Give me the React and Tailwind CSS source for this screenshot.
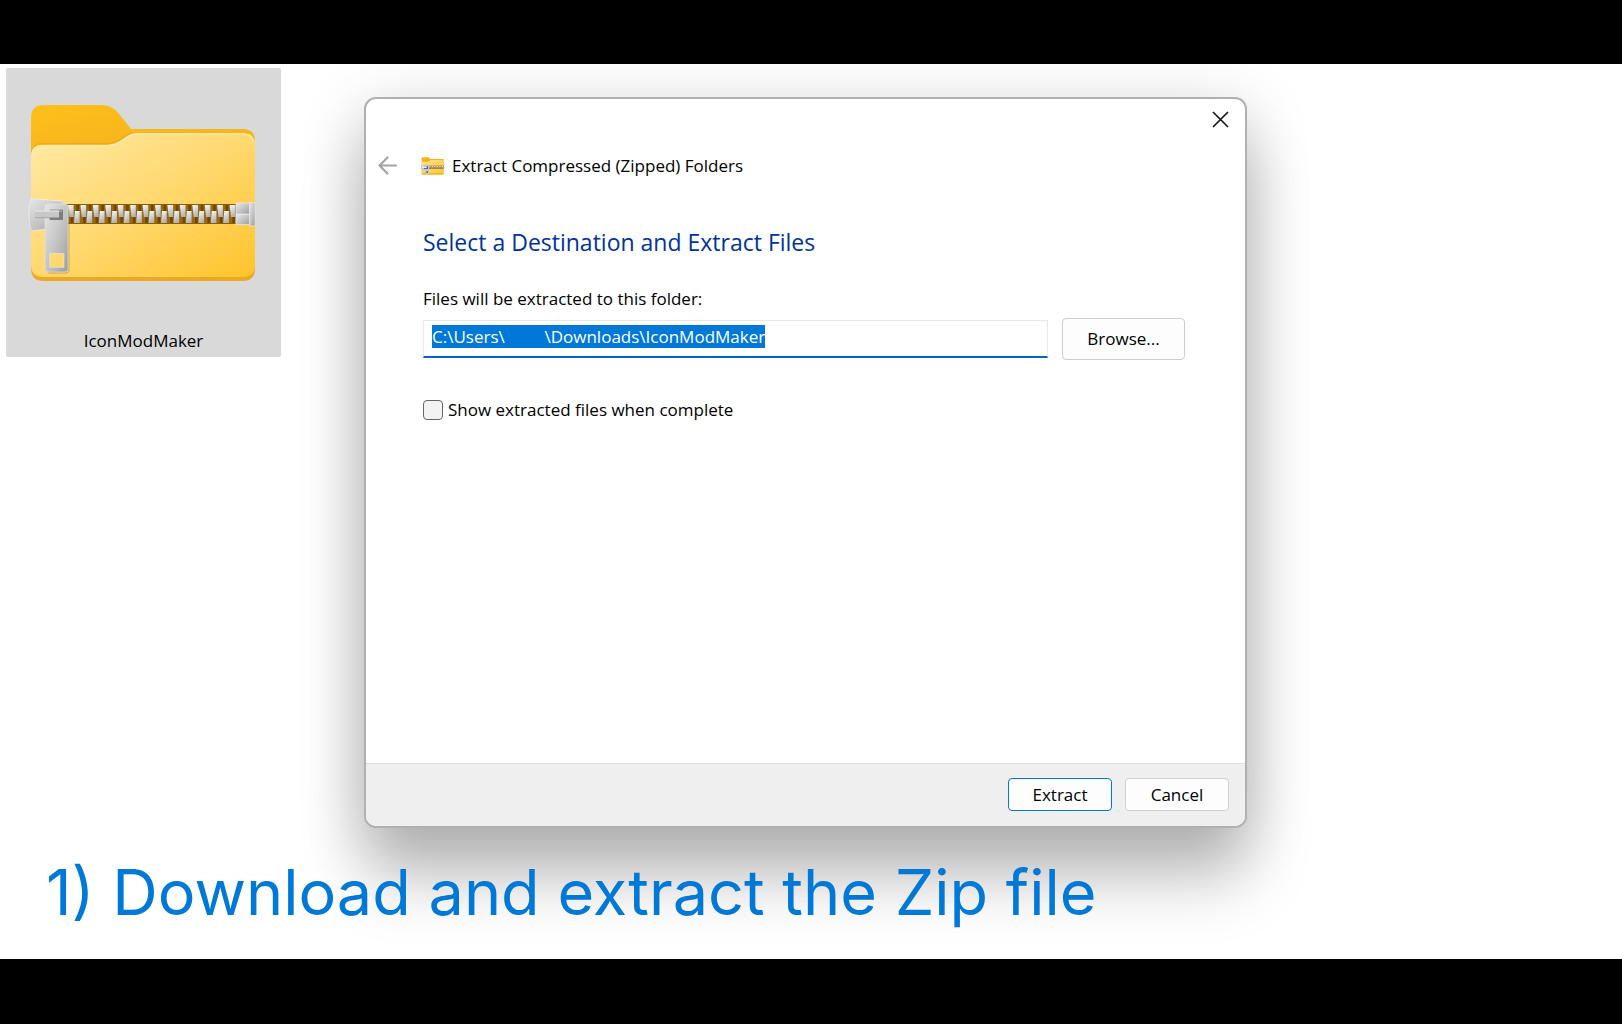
import { useEffect, useRef } from "react";

const TEETH = Array.from({ length: 14 }, (_, i) => 204 + i * 37.3);

function ZipFolder({ className }) {
  return (
    <svg className={className} viewBox="84 147 690 534" aria-hidden="true">
      <defs>
        <linearGradient id="zip-back" x1="0" y1="0" x2="0.3" y2="1">
          <stop offset="0" stopColor="#ffc01a" />
          <stop offset="0.22" stopColor="#f9b81c" />
          <stop offset="1" stopColor="#eaa824" />
        </linearGradient>
        <linearGradient id="zip-front" x1="0" y1="0" x2="1" y2="1">
          <stop offset="0" stopColor="#ffeaa6" />
          <stop offset="0.5" stopColor="#ffd86f" />
          <stop offset="1" stopColor="#ffc42b" />
        </linearGradient>
        <linearGradient id="zip-metal" x1="0" y1="0" x2="1" y2="1">
          <stop offset="0" stopColor="#e6e6e6" />
          <stop offset="0.5" stopColor="#c6c6c6" />
          <stop offset="1" stopColor="#9c9c9c" />
        </linearGradient>
        <linearGradient id="zip-tooth" x1="0" y1="0" x2="0.3" y2="1">
          <stop offset="0" stopColor="#fafafa" />
          <stop offset="1" stopColor="#b4b4b4" />
        </linearGradient>
        <clipPath id="zip-track">
          <rect x="196" y="447" width="512" height="60" />
        </clipPath>
      </defs>
      <path fill="url(#zip-back)" d="M93 190Q93 150 131 150H308Q338 150 360 180L393 222H728Q765 222 765 258V640Q765 678 728 678H131Q93 678 93 640Z" />
      <path fill="#d99a10" opacity="0.35" d="M93 300Q93 264 126 264H318Q345 264 370 245L393 230V260L340 290H93Z" />
      <path fill="url(#zip-front)" d="M93 304Q93 269 128 269H320Q345 269 367 253Q390 234 412 234H728Q765 234 765 268V630Q765 666 728 666H131Q93 666 93 630Z" />
      <path fill="none" stroke="#fff0bd" strokeWidth="4" opacity="0.6" d="M96 300Q98 272 128 272H320Q347 272 370 255Q392 237 412 237H728Q757 237 762 262" />
      <rect x="196" y="447" width="512" height="60" fill="#996b0e" />
      <g clipPath="url(#zip-track)">
        {TEETH.map((x) => (
          <g key={x}>
            <rect x={x - 12} y="450" width="8" height="18" fill="#6f4700" />
            <rect x={x + 8} y="486" width="8" height="18" fill="#6f4700" />
            <path d={`M${x} 450h17v36h-13z`} fill="url(#zip-tooth)" />
            <path d={`M${x + 21} 468h14v36h-17z`} fill="url(#zip-tooth)" />
          </g>
        ))}
        <path d="M196 448H708M196 506H708" stroke="#7a5206" strokeWidth="2" />
      </g>
      <rect x="708" y="444" width="40" height="33" fill="url(#zip-metal)" stroke="#ededed" strokeWidth="2" />
      <rect x="708" y="478" width="40" height="31" fill="url(#zip-metal)" stroke="#ededed" strokeWidth="2" />
      <rect x="748" y="442" width="17" height="71" fill="url(#zip-metal)" stroke="#e8e8e8" strokeWidth="2" />
      <path fill="url(#zip-metal)" stroke="#f2f2f2" strokeWidth="2" d="M94 431L180 438Q192 440 195 450L204 458V500L136 523L97 527Q92 527 90 515Q84 480 88 450Z" />
      <path fill="#80611f" opacity="0.3" d="M204 460Q209 462 209 470V642Q209 656 196 656H145V650H204Z" />
      <path fill="url(#zip-metal)" stroke="#e4e4e4" strokeWidth="2" fillRule="evenodd" d="M145 447H195Q204 447 204 457V641Q204 651 195 651H145Q135 651 135 641V457Q135 447 145 447ZM149 595V637H192V595Z" />
      <rect x="149" y="464" width="40" height="31" fill="#7d7d7d" />
      <rect x="152" y="467" width="34" height="4" fill="#a9a9a9" />
      <rect x="105" y="467" width="72" height="21" fill="#c8c8c8" />
      <path d="M105 468H177" stroke="#ededed" strokeWidth="3" />
      <path d="M105 488H177" stroke="#969696" strokeWidth="2" />
    </svg>
  );
}

function SmallZipFolder({ className }) {
  return (
    <svg className={className} viewBox="0 0 69 54" aria-hidden="true">
      <defs>
        <linearGradient id="mini-front" x1="0" y1="0" x2="1" y2="1">
          <stop offset="0" stopColor="#ffe391" />
          <stop offset="1" stopColor="#fdc636" />
        </linearGradient>
      </defs>
      <path fill="#f5b21b" d="M2 4Q2 1 5 1H21Q24 1 26 4L28 6H66Q68 6 68 8V51Q68 53 66 53H4Q2 53 2 51Z" />
      <path fill="url(#mini-front)" d="M2 14H23L28 9H68V49H2Z" />
      <rect x="22" y="26" width="46" height="10" fill="#8a6a2c" />
      <path d="M23 29H68" stroke="#f0e8d8" strokeWidth="4" strokeDasharray="3 2" />
      <path d="M25 33H68" stroke="#d4c8b0" strokeWidth="3" strokeDasharray="3 2" />
      <path fill="#c4c8cf" d="M0 25L8 23H20Q24 24 24 28V51H12V39L2 38Q0 37 0 34Z" />
      <path fill="#666b75" d="M9 27H21V36H9Z" />
      <path fill="#e9ebee" d="M3 28H17V33H3Z" />
      <path fill="#686b70" d="M16 43H21V48H16Z" />
    </svg>
  );
}

function FileTile({ name }) {
  return (
    <figure className="flex h-[289px] w-[275px] shrink-0 flex-col justify-between rounded-xs bg-[#d9d9d9] pt-9 pb-1">
      <ZipFolder className="ml-[22px] w-[230px]" />
      <figcaption className="text-center text-[17px] leading-6">{name}</figcaption>
    </figure>
  );
}

function ExtractDialog() {
  const field = useRef(null);
  useEffect(() => {
    field.current.focus();
    field.current.select();
  }, []);

  return (
    <section
      role="dialog"
      aria-labelledby="wizard-title"
      className="flex min-h-[731px] max-w-[883px] flex-1 flex-col overflow-hidden rounded-xl border-2 border-[#b0b0b0] bg-white text-[17px] leading-6 shadow-[0_52px_64px_rgba(0,0,0,0.22),0_12px_64px_rgba(0,0,0,0.18)]"
    >
      <div className="flex justify-end px-[15px] pt-[11px]">
        <button type="button" aria-label="Close" className="p-px">
          <svg className="size-[17px]" viewBox="0 0 17 17" fill="none" stroke="#111" strokeWidth="1.6" aria-hidden="true">
            <path d="M1 1L16 16M16 1L1 16" />
          </svg>
        </button>
      </div>
      <header className="mt-[25px] flex items-center px-3">
        <button type="button" aria-label="Back" className="mr-[23px]">
          <svg className="size-5" viewBox="0 0 20 20" fill="none" stroke="#a3a3a3" strokeWidth="2.2" strokeLinecap="round" strokeLinejoin="round" aria-hidden="true">
            <path d="M18 9.500H2M9.500 1.500L1.500 9.500L9.500 17.500" />
          </svg>
        </button>
        <SmallZipFolder className="mr-2 w-[23px]" />
        <h1 id="wizard-title">Extract Compressed (Zipped) Folders</h1>
      </header>
      <div className="flex-1 pr-[60px] pl-[57px]">
        <h2 className="mt-12 text-[23px] leading-8 text-[#003399]">Select a Destination and Extract Files</h2>
        <label htmlFor="target" className="mt-[29px] block">Files will be extracted to this folder:</label>
        <div className="mt-[7px] flex items-center gap-[14px]">
          <input
            id="target"
            ref={field}
            type="text"
            defaultValue={"C:\\Users\\         \\Downloads\\IconModMaker"}
            className="h-[38px] min-w-0 flex-1 border border-b-2 border-[#e8e8e8] border-b-[#0067c0] bg-white px-2 pb-1 caret-transparent outline-none selection:bg-[#0078d7] selection:text-white"
          />
          <button type="button" className="h-[42px] w-[123px] rounded border border-[#cdcdcd] bg-[#fdfdfd]">Browse...</button>
        </div>
        <div className="mt-[38px] flex items-center gap-[5px]">
          <input id="show" type="checkbox" className="size-5 appearance-none rounded border border-[#666] bg-[#f3f3f3]" />
          <label htmlFor="show">Show extracted files when complete</label>
        </div>
      </div>
      <footer className="flex justify-end gap-[13px] border-t border-[#dcdcdc] bg-[#efefef] px-4 pt-[14px] pb-[15px]">
        <button type="button" className="h-[33px] w-[104px] rounded border border-[#0078d4] bg-[#fdfdfd]">Extract</button>
        <button type="button" className="h-[33px] w-[104px] rounded border border-[#d0d0d0] bg-[#fdfdfd]">Cancel</button>
      </footer>
    </section>
  );
}

export default function App() {
  return (
    <div className="flex min-h-screen flex-col bg-black font-['Open_Sans','Noto_Sans',sans-serif] text-black">
      <main className="mt-16 mb-[65px] flex-1 overflow-hidden bg-white">
        <div className="flex items-start gap-[83px] px-[6px] pt-1">
          <FileTile name="IconModMaker" />
          <div className="flex flex-1 pt-[29px]">
            <ExtractDialog />
          </div>
        </div>
        <p className="relative mt-7 pl-[46px] font-['Inter',sans-serif] text-[63px] leading-[72px] text-[#0078d7]">
          1) Download and extract the Zip file
        </p>
      </main>
    </div>
  );
}
